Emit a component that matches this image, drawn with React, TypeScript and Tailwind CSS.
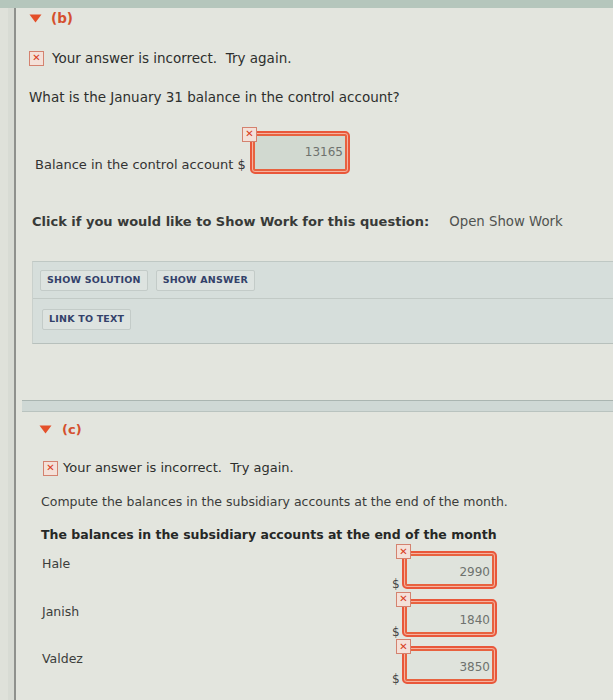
const font = { fontFamily: '"DejaVu Sans", Verdana, sans-serif' };

function XMark({ className = "" }: { className?: string }) {
  return (
    <span
      className={`inline-flex items-center justify-center w-[15px] h-[15px] border border-[#d4826f] bg-[#f4e1d9] text-[#d83a22] text-[10px] font-bold leading-none ${className}`}
    >
      ✕
    </span>
  );
}

function Caret() {
  return (
    <svg width="13" height="9" viewBox="0 0 13 9" className="shrink-0">
      <path d="M0.5 0.5 H12.5 L6.5 8.5 Z" fill="#e4502a" />
    </svg>
  );
}

function RedInput({ value, shade = false }: { value: string; shade?: boolean }) {
  return (
    <div
      className={`w-full h-full rounded-[5px] border-2 border-[#e9573a] shadow-[inset_0_0_0_1px_#f5b3a0,inset_0_0_0_3px_#e8623f] flex justify-end pr-[5px] pt-[10px] text-[12px] text-[#6e726e] ${shade ? "bg-[#d1d9d0]" : "bg-[#dfe3dc]"}`}
    >
      {value}
    </div>
  );
}

function SubRow({ name, value }: { name: string; value: string }) {
  return (
    <div className="flex items-start h-[47.5px]">
      <div className="w-[351px] pt-[4px] text-[12.5px] text-[#3b3d3b] pl-[1px]">{name}</div>
      <div className="relative w-[110px] h-[38px]">
        <XMark className="absolute left-[4px] top-[-7px] z-10" />
        <span className="absolute left-0 bottom-[-4px] text-[12px] leading-[18px] text-[#444]">$</span>
        <div className="absolute left-[10px] top-0 w-[95px] h-[38px]">
          <RedInput value={value} />
        </div>
      </div>
    </div>
  );
}

function SmallButton({ children }: { children: React.ReactNode }) {
  return (
    <span className="inline-flex items-center h-[21px] px-[6px] rounded-[2px] border border-[#c3cbc8] bg-[#dde3e0] text-[9.5px] font-bold text-[#33416a] tracking-[0.2px]">
      {children}
    </span>
  );
}

export default function App() {
  return (
    <div className="w-[613px] h-[700px] overflow-hidden bg-[#e3e5de] flex flex-col" style={font}>
      <div className="h-[8px] bg-[#b5c6bc] shrink-0" />
      <div className="flex flex-1">
        <div className="w-[16px] shrink-0 bg-[#d8dbd4] border-l-[8px] border-l-[#dfe1da] border-r-[2px] border-r-[#8f918d]" />
        <div className="flex-1 flex flex-col">
          {/* part b */}
          <div className="pl-[13px] pt-[1px]">
            <div className="flex items-center gap-[9px] h-[18px]">
              <Caret />
              <span className="text-[#d4502e] font-bold text-[13.5px]">(b)</span>
            </div>
            <div className="flex items-center gap-[8px] mt-[21px] text-[13.5px] text-[#2d2f2d]">
              <XMark />
              <span>Your answer is incorrect.&nbsp; Try again.</span>
            </div>
            <div className="mt-[19px] text-[13.5px] text-[#2d2f2d]">
              What is the January 31 balance in the control account?
            </div>
            <div className="flex items-end mt-[19px] h-[50px]">
              <div className="pl-[6px] pb-[2px] text-[13px] text-[#333] w-[221px] whitespace-nowrap">
                Balance in the control account $
              </div>
              <div className="relative w-[112px] h-[50px]">
                <XMark className="absolute left-[-8px] top-0 z-10" />
                <div className="absolute left-0 top-[4px] w-[100px] h-[43px]">
                  <RedInput value="13165" shade />
                </div>
              </div>
            </div>
            <div className="flex items-center mt-[35px] text-[13px]">
              <span className="font-bold text-[#383a38] pl-[3px]">
                Click if you would like to Show Work for this question:
              </span>
              <span className="ml-[20px] text-[13.3px] text-[#505350]">Open Show Work</span>
            </div>
          </div>

          {/* button panel */}
          <div className="ml-[16px] mt-[30px] h-[83px] bg-[#d6dedb] border-t border-t-[#bfc8c4] border-l border-l-[#c9d0cc] border-b border-b-[#b7c0bc] flex flex-col">
            <div className="h-[37px] flex items-center gap-[8px] pl-[7px] border-b border-b-[#c2cac6]">
              <SmallButton>SHOW SOLUTION</SmallButton>
              <SmallButton>SHOW ANSWER</SmallButton>
            </div>
            <div className="h-[40px] flex items-center pl-[9px]">
              <SmallButton>LINK TO TEXT</SmallButton>
            </div>
          </div>

          <div className="h-[56px]" />
          <div className="ml-[6px] h-[12px] bg-[#cfd8d5] border-t border-t-[#aab5b1] border-b border-b-[#b9c3bf]" />

          {/* part c */}
          <div className="pl-[23px] pt-[8px]">
            <div className="flex items-center gap-[10px] h-[18px]">
              <Caret />
              <span className="text-[#d4502e] font-bold text-[13px]">(c)</span>
            </div>
            <div className="flex items-center gap-[5px] mt-[20px] pl-[4px] text-[13px] text-[#2d2f2d]">
              <XMark />
              <span>Your answer is incorrect.&nbsp; Try again.</span>
            </div>
            <div className="mt-[15px] pl-[2px] text-[12.5px] text-[#3a3c3a] whitespace-nowrap">
              Compute the balances in the subsidiary accounts at the end of the month.
            </div>
            <div className="mt-[14px] pl-[2px] text-[12.5px] font-bold text-[#262826] whitespace-nowrap">
              The balances in the subsidiary accounts at the end of the month
            </div>
            <div className="mt-[7px] pl-[2px] flex flex-col">
              <SubRow name="Hale" value="2990" />
              <SubRow name="Janish" value="1840" />
              <SubRow name="Valdez" value="3850" />
            </div>
          </div>
        </div>
      </div>
    </div>
  );
}
